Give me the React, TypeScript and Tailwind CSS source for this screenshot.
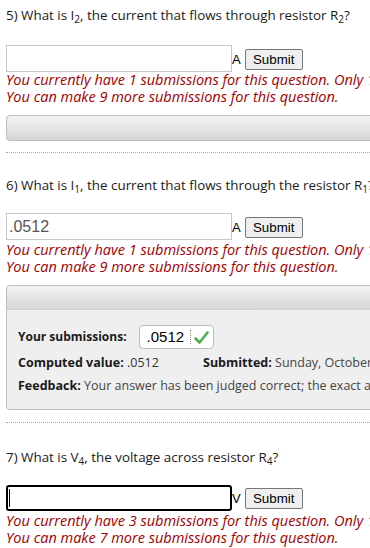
import React from "react";

const font = { fontFamily: '"Open Sans", "Noto Sans", sans-serif' };
const arial = { fontFamily: '"Liberation Sans", Arial, sans-serif' };

function Dotted() {
  return <div className="w-[600px] border-t border-dotted border-[#aaa]" />;
}

function Question({
  num,
  sym,
  sub,
  rest,
  value,
  unit,
  focused,
  used,
  left,
  gap,
  redPad,
}: {
  num: number;
  sym: string;
  sub: string;
  rest: React.ReactNode;
  value: string;
  unit: string;
  focused?: boolean;
  used: number;
  left: number;
  gap: string;
  redPad: string;
}) {
  return (
    <div>
      <div className="text-[13.4px] leading-[18px] text-[#1a1a1a] whitespace-nowrap">
        {num}) What is {sym}
        <sub className="text-[10px]">{sub}</sub>, {rest}
      </div>
      <div className={gap + " flex items-end whitespace-nowrap"}>
        <div
          className={
            focused
              ? "h-[26px] w-[226px] rounded-[3px] border-2 border-black bg-white flex items-center"
              : "h-[27px] w-[226px] border border-[#c8c8c8] bg-white flex items-center"
          }
        >
          {focused ? (
            <div className="ml-[1px] h-[18px] w-px bg-black" />
          ) : (
            <span className="pl-[2px] text-[16px] text-[#555]" style={arial}>
              {value}
            </span>
          )}
        </div>
        <span className="mb-[3px] text-[13px] text-black" style={arial}>
          {unit}
        </span>
        <button
          className="ml-[4px] mb-[2px] h-[21px] w-[58px] rounded-[2px] border border-[#767676] bg-[#efefef] text-[13.33px] text-black"
          style={arial}
        >
          Submit
        </button>
      </div>
      <div className={redPad + " text-[14.5px] italic leading-[16.5px] text-[#a00000] whitespace-nowrap"}>
        <div>
          You currently have {used} submissions for this question. Only 10
          submissions are allowed.
        </div>
        <div>You can make {left} more submissions for this question.</div>
      </div>
    </div>
  );
}

export default function App() {
  return (
    <div className="w-[370px] h-[548px] overflow-hidden bg-white" style={font}>
      <div className="w-[700px] pl-[6px]">
        <div className="pt-[6px]">
          <Question
            num={5}
            sym="I"
            sub="2"
            rest={
              <>
                the current that flows through resistor R<sub className="text-[10px]">2</sub>?
              </>
            }
            value=""
            unit="A"
            used={1}
            left={9}
            gap="mt-[21px]"
            redPad="pt-0"
          />
          <div className="mt-[10px] h-[26px] w-[600px] rounded-[4px] border border-[#bdbdbd] bg-gradient-to-b from-[#f3f3f3] to-[#d6d6d6]" />
        </div>
        <div className="mt-[11px]">
          <Dotted />
        </div>
        <div className="pt-[23px]">
          <Question
            num={6}
            sym="I"
            sub="1"
            rest={<>the current that flows through the resistor R<sub className="text-[10px]">1</sub>?</>}
            value=".0512"
            unit="A"
            used={1}
            left={9}
            gap="mt-[19px]"
            redPad="pt-[2px]"
          />
          <div className="mt-[10px] w-[600px] rounded-[4px] border border-[#bdbdbd] bg-[#efefef]">
            <div className="h-[24px] rounded-t-[4px] border-b border-[#cfcfcf] bg-gradient-to-b from-[#f3f3f3] to-[#d6d6d6]" />
            <div className="px-[11px] pt-[15px] pb-[13px] text-[12.5px] text-[#1a1a1a] whitespace-nowrap">
              <div className="flex items-center">
                <span className="font-bold text-[12px]">Your submissions:</span>
                <div className="ml-[12px] flex h-[24px] items-center rounded-[4px] border border-[#bbb] bg-white pl-[7px] pr-[3px]">
                  <span className="text-[15px] text-black" style={arial}>
                    .0512
                  </span>
                  <span className="ml-[6px] h-[14px] border-l border-dotted border-[#999]" />
                  <svg width="17" height="17" viewBox="0 0 17 17" className="ml-[2px]">
                    <path
                      d="M2.5 9.5 L6.5 13.5 L14.5 3.5"
                      fill="none"
                      stroke="#4caf50"
                      strokeWidth="2.6"
                      strokeLinecap="round"
                      strokeLinejoin="round"
                    />
                  </svg>
                </div>
              </div>
              <div className="mt-[4px] flex leading-[20px]">
                <span className="w-[185px]">
                  <span className="font-bold">Computed value:</span>{" "}
                  <span className="text-[#333]">.0512</span>
                </span>
                <span>
                  <span className="font-bold">Submitted:</span>{" "}
                  <span className="text-[#444]">Sunday, October 18, 2020 09:14:22 PM</span>
                </span>
              </div>
              <div className="mt-[3px] leading-[20px]">
                <span className="font-bold">Feedback:</span>{" "}
                <span className="text-[#444]">
                  Your answer has been judged correct; the exact answer is .0512 A.
                </span>
              </div>
            </div>
          </div>
        </div>
        <div className="mt-[12px]">
          <Dotted />
        </div>
        <div className="pt-[25px]">
          <Question
            num={7}
            sym="V"
            sub="4"
            rest={<>the voltage across resistor R<sub className="text-[10px]">4</sub>?</>}
            value=""
            unit="V"
            focused
            used={3}
            left={7}
            gap="mt-[19px]"
            redPad="pt-[2px]"
          />
        </div>
      </div>
    </div>
  );
}
